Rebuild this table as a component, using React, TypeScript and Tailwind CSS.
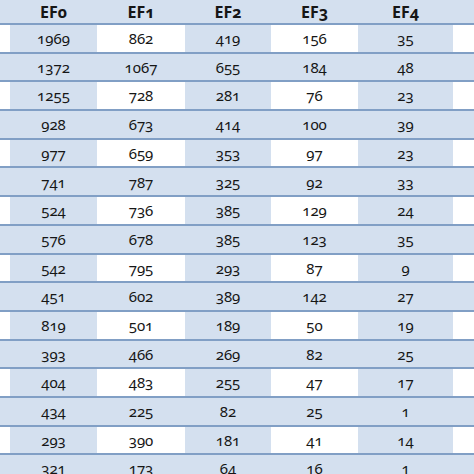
const headers = ["EF0", "EF1", "EF2", "EF3", "EF4"];

const rows: number[][] = [
  [1969, 862, 419, 156, 35],
  [1372, 1067, 655, 184, 48],
  [1255, 728, 281, 76, 23],
  [928, 673, 414, 100, 39],
  [977, 659, 353, 97, 23],
  [741, 787, 325, 92, 33],
  [524, 736, 385, 129, 24],
  [576, 678, 385, 123, 35],
  [542, 795, 293, 87, 9],
  [451, 602, 389, 142, 27],
  [819, 501, 189, 50, 19],
  [393, 466, 269, 82, 25],
  [404, 483, 255, 47, 17],
  [434, 225, 82, 25, 1],
  [293, 390, 181, 41, 14],
  [321, 173, 64, 16, 1],
];

const cols = "grid grid-cols-[10px_87px_88px_86px_87px_95px_1fr]";

export default function App() {
  return (
    <div className="h-[474px] w-[474px] overflow-hidden bg-[#d4e0ef] font-['Noto_Sans',sans-serif] text-[#161616] oldstyle-nums">
      <div className={`${cols} h-[23px] items-center text-[16px] font-bold`}>
        <div />
        {headers.map((h) => (
          <div key={h} className="text-center leading-none">
            {h}
          </div>
        ))}
        <div />
      </div>
      {rows.map((r, i) => {
        const banded = i % 2 === 0;
        return (
          <div
            key={i}
            className={`${cols} h-[28.7px] border-t-2 border-[#819fc5] text-[15px]`}
          >
            <div className={banded ? "bg-white" : ""} />
            {r.map((v, j) => (
              <div
                key={j}
                className={`flex items-center justify-center ${banded && j % 2 === 1 ? "bg-white" : ""}`}
              >
                {v}
              </div>
            ))}
            <div className={banded ? "bg-white" : ""} />
          </div>
        );
      })}
    </div>
  );
}
